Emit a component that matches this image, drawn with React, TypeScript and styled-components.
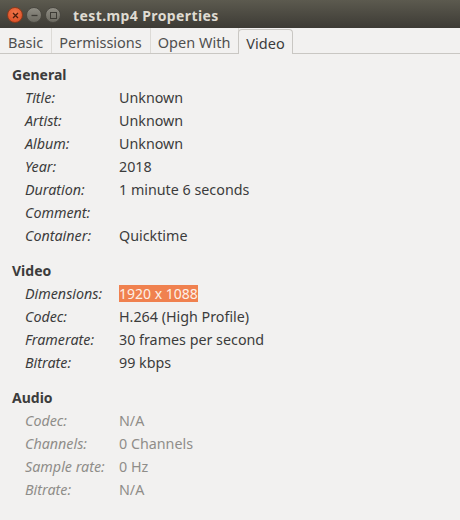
import styled, { createGlobalStyle } from "styled-components";

const GlobalStyle = createGlobalStyle`
  html, body {
    margin: 0;
    padding: 0;
    background: #f2f1f0;
  }
`;

const Window = styled.div`
  width: 460px;
  height: 520px;
  overflow: hidden;
  display: flex;
  flex-direction: column;
  background: #f2f1f0;
  color: #3c3c3c;
  font-family: "Noto Sans", "Open Sans", sans-serif;
  font-size: 14.3px;
`;

const TitleBar = styled.div`
  height: 28px;
  box-sizing: border-box;
  flex-shrink: 0;
  display: flex;
  align-items: center;
  padding: 2px 0 0 7px;
  background: linear-gradient(#5c5a4f, #3d3b35);
`;

const WindowButtons = styled.div`
  display: flex;
  gap: 3px;
  width: 66px;
`;

const WindowButton = styled.div<{ $close?: boolean }>`
  width: 16px;
  height: 16px;
  border-radius: 50%;
  display: flex;
  align-items: center;
  justify-content: center;
  background: ${({ $close }) =>
    $close ? "radial-gradient(circle at 50% 35%, #f0764a, #d9481f)" : "linear-gradient(#8f8d84, #6c6a61)"};
  border: 1px solid ${({ $close }) => ($close ? "#8c3a1c" : "#4a4841")};
  box-sizing: border-box;
`;

const Title = styled.span`
  color: #dfdbd2;
  font-weight: 700;
  font-size: 14px;
  letter-spacing: 0.4px;
`;

const TabBar = styled.div`
  height: 25px;
  flex-shrink: 0;
  display: flex;
  align-items: stretch;
  padding-left: 1px;
  border-bottom: 1px solid #c9c7c3;
`;

const Tab = styled.div<{ $active?: boolean }>`
  display: flex;
  align-items: center;
  box-sizing: border-box;
  padding: 3px ${({ $active }) => ($active ? "7px" : "8px")} 0 7px;
  color: ${({ $active }) => ($active ? "#3c3c3c" : "#4f4f4f")};
  font-size: 14.5px;
  ${({ $active }) =>
    $active
      ? `
    margin: 1px 0 -1px -1px;
    padding-top: 2px;
    background: #f2f1f0;
    border: 1px solid #c9c7c3;
    border-bottom: none;
    border-radius: 4px 4px 0 0;
  `
      : `
    border-right: 1px solid #dcdad6;
  `}
`;

const Content = styled.div`
  display: flex;
  flex-direction: column;
  gap: 12px;
  padding: 9px 0 0 12px;
`;

const Section = styled.section<{ $disabled?: boolean }>`
  display: flex;
  flex-direction: column;
  color: ${({ $disabled }) => ($disabled ? "#8f8d89" : "#3c3c3c")};
`;

const Heading = styled.div`
  height: 23px;
  line-height: 23px;
  font-weight: 700;
  font-size: 14px;
  color: #3c3c3c;
`;

const Row = styled.div`
  height: 23px;
  line-height: 23px;
  display: flex;
  padding-left: 13px;
`;

const Label = styled.span`
  width: 94px;
  flex-shrink: 0;
  font-style: italic;
`;

const Value = styled.span<{ $selected?: boolean }>`
  ${({ $selected }) =>
    $selected
      ? `
    height: 17px;
    line-height: 17px;
    margin-top: 3px;
    font-size: 14px;
    background: #f0814f;
    color: #fdf0e8;
  `
      : ""}
`;

type Field = { label: string; value?: string; selected?: boolean };

const sections: { title: string; disabled?: boolean; fields: Field[] }[] = [
  {
    title: "General",
    fields: [
      { label: "Title:", value: "Unknown" },
      { label: "Artist:", value: "Unknown" },
      { label: "Album:", value: "Unknown" },
      { label: "Year:", value: "2018" },
      { label: "Duration:", value: "1 minute 6 seconds" },
      { label: "Comment:" },
      { label: "Container:", value: "Quicktime" },
    ],
  },
  {
    title: "Video",
    fields: [
      { label: "Dimensions:", value: "1920 x 1088", selected: true },
      { label: "Codec:", value: "H.264 (High Profile)" },
      { label: "Framerate:", value: "30 frames per second" },
      { label: "Bitrate:", value: "99 kbps" },
    ],
  },
  {
    title: "Audio",
    disabled: true,
    fields: [
      { label: "Codec:", value: "N/A" },
      { label: "Channels:", value: "0 Channels" },
      { label: "Sample rate:", value: "0 Hz" },
      { label: "Bitrate:", value: "N/A" },
    ],
  },
];

const App = () => {
  return (
    <Window>
      <GlobalStyle />
      <TitleBar>
        <WindowButtons>
          <WindowButton $close>
            <svg width="7" height="7" viewBox="0 0 7 7">
              <path d="M1 1l5 5M6 1L1 6" stroke="#4a1d0c" strokeWidth="1.3" />
            </svg>
          </WindowButton>
          <WindowButton>
            <svg width="7" height="7" viewBox="0 0 7 7">
              <path d="M0.5 3.5h6" stroke="#3d3b35" strokeWidth="1.3" />
            </svg>
          </WindowButton>
          <WindowButton>
            <svg width="7" height="7" viewBox="0 0 7 7">
              <rect x="0.5" y="0.5" width="6" height="6" fill="none" stroke="#3d3b35" />
            </svg>
          </WindowButton>
        </WindowButtons>
        <Title>test.mp4 Properties</Title>
      </TitleBar>
      <TabBar>
        <Tab>Basic</Tab>
        <Tab>Permissions</Tab>
        <Tab>Open With</Tab>
        <Tab $active>Video</Tab>
      </TabBar>
      <Content>
        {sections.map((section) => (
          <Section key={section.title} $disabled={section.disabled}>
            <Heading>{section.title}</Heading>
            {section.fields.map((field) => (
              <Row key={field.label}>
                <Label>{field.label}</Label>
                <Value $selected={field.selected}>{field.value}</Value>
              </Row>
            ))}
          </Section>
        ))}
      </Content>
    </Window>
  );
};

export default App;
